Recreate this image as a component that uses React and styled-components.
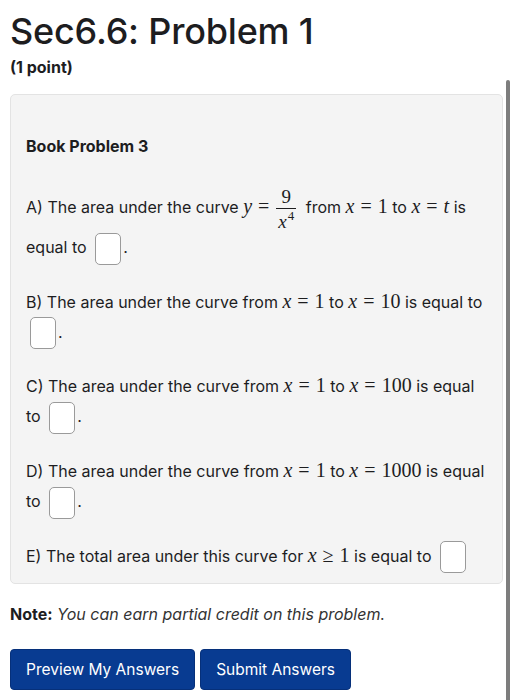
import * as React from "react";
import styled, { createGlobalStyle } from "styled-components";

const GlobalStyle = createGlobalStyle`
  body {
    margin: 0;
    background: #ffffff;
    color: #1d1d1f;
    font-family: Inter, "Noto Sans", sans-serif;
  }
`;

const Page = styled.div`
  padding: 8px 12px 20px 10px;
`;

const Title = styled.h1`
  margin: 0;
  font-size: 36px;
  font-weight: 500;
  letter-spacing: -0.2px;
  line-height: 46px;
`;

const Points = styled.div`
  margin-top: 3px;
  font-size: 16px;
  font-weight: 700;
`;

const Card = styled.div`
  margin-top: 17px;
  background: #f4f4f4;
  border: 1px solid #e3e3e3;
  border-radius: 5px;
  padding: 41px 14px 10px 15px;
`;

const Heading = styled.div`
  font-size: 16px;
  font-weight: 700;
  line-height: 20px;
  margin-bottom: 30px;
`;

const Part = styled.p`
  margin: 0 0 21px;
  font-size: 16px;
  line-height: 30px;
  &:last-child {
    margin-bottom: 0;
  }
`;

const Math = styled.span`
  font-family: "Liberation Serif", "DejaVu Serif", serif;
  font-size: 20px;
  white-space: nowrap;
`;

const Var = styled.i`
  font-style: italic;
`;

const Op = styled.span`
  padding: 0 6px;
`;

const Frac = styled.span`
  display: inline-flex;
  flex-direction: column;
  align-items: center;
  vertical-align: middle;
  line-height: 21px;
  margin: 0 5px 0 1px;
  font-family: "Liberation Serif", "DejaVu Serif", serif;
  font-size: 19px;
`;

const Num = styled.span`
  align-self: stretch;
  text-align: center;
  padding-bottom: 1px;
  border-bottom: 1px solid #1d1d1f;
`;

const Den = styled.span`
  padding: 2px 2px 0;
  i {
    font-style: italic;
  }
  sup {
    font-size: 13px;
    vertical-align: 8px;
    line-height: 0;
    margin-left: 1px;
  }
`;

const AnswerBox = styled.span`
  display: inline-block;
  width: 26px;
  height: 32px;
  margin: 0 2px 0 4px;
  vertical-align: middle;
  background: #ffffff;
  border: 1px solid #9a9a9a;
  border-radius: 5px;
  box-sizing: border-box;
`;

const Note = styled.p`
  margin: 20px 0 0;
  font-size: 16px;
  strong {
    font-weight: 700;
  }
  em {
    font-style: italic;
    color: #333;
  }
`;

const Buttons = styled.div`
  display: flex;
  gap: 5px;
  margin-top: 25px;
`;

const Button = styled.button`
  height: 41px;
  padding: 0 15px;
  background: #083b91;
  color: #ffffff;
  border: 1px solid #06307a;
  border-radius: 4px;
  font-family: Inter, "Noto Sans", sans-serif;
  font-size: 15.5px;
  cursor: pointer;
`;

const ScrollBar = styled.div`
  position: fixed;
  top: 80px;
  bottom: 0;
  left: 506px;
  width: 4px;
  background: #7d7d7d;
  border-radius: 2px 2px 0 0;
`;

const Eq = ({ left, right, op = "=" }) => (
  <Math>
    <Var>{left}</Var>
    <Op>{op}</Op>
    {right}
  </Math>
);

const Box = ({ dot = true }) => (
  <>
    <AnswerBox />
    {dot && "."}
  </>
);

export default function App() {
  return (
    <Page>
      <GlobalStyle />
      <ScrollBar />
      <Title>Sec6.6: Problem 1</Title>
      <Points>(1 point)</Points>
      <Card>
        <Heading>Book Problem 3</Heading>
        <Part>
          A) The area under the curve{" "}
          <Math>
            <Var>y</Var>
            <Op>=</Op>
          </Math>
          <Frac>
            <Num>9</Num>
            <Den>
              <i>x</i>
              <sup>4</sup>
            </Den>
          </Frac>{" "}
          from <Eq left="x" right="1" /> to <Eq left="x" right={<Var>t</Var>} /> is
          equal to <Box />
        </Part>
        <Part>
          B) The area under the curve from <Eq left="x" right="1" /> to{" "}
          <Eq left="x" right="10" /> is equal to <Box />
        </Part>
        <Part>
          C) The area under the curve from <Eq left="x" right="1" /> to{" "}
          <Eq left="x" right="100" /> is equal to <Box />
        </Part>
        <Part>
          D) The area under the curve from <Eq left="x" right="1" /> to{" "}
          <Eq left="x" right="1000" /> is equal to <Box />
        </Part>
        <Part>
          E) The total area under this curve for <Eq left="x" op="≥" right="1" /> is
          equal to <Box dot={false} />
        </Part>
      </Card>
      <Note>
        <strong>Note:</strong> <em>You can earn partial credit on this problem.</em>
      </Note>
      <Buttons>
        <Button type="button">Preview My Answers</Button>
        <Button type="button">Submit Answers</Button>
      </Buttons>
    </Page>
  );
}
